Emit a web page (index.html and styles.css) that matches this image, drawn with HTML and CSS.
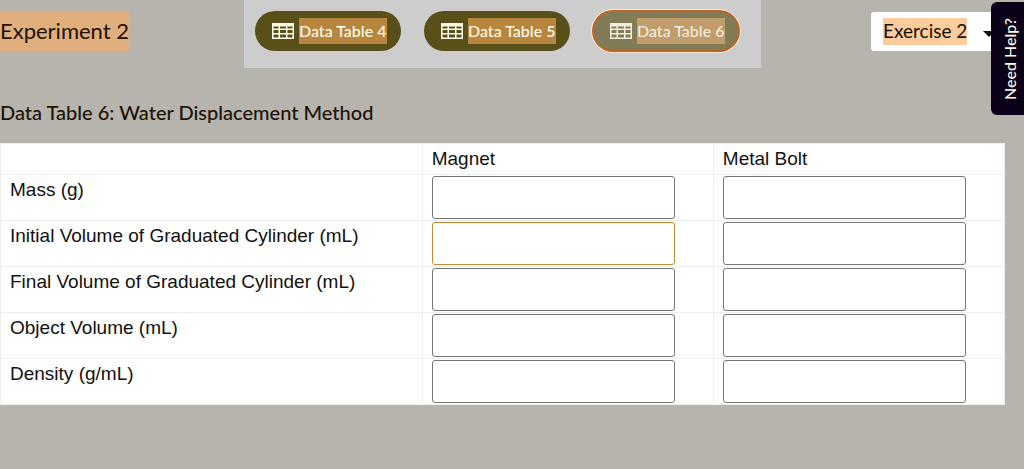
FILE: index.html
```html
<!DOCTYPE html>
<html lang="en">
<head>
<meta charset="utf-8">
<meta name="viewport" content="width=device-width, initial-scale=1">
<title>Experiment 2</title>
<link rel="stylesheet" href="styles.css">
</head>
<body>
<svg class="sprite" aria-hidden="true">
  <symbol id="grid" viewBox="0 0 22 16">
    <path fill="currentColor" fill-rule="evenodd" d="M0 0h22v16H0zM1.500 3.500v2h5v-2zM8 3.500v2h6v-2zM15.500 3.500v2h5v-2zM1.500 7v3h5V7zM8 7v3h6V7zM15.500 7v3h5V7zM1.500 11.500v3h5v-3zM8 11.500v3h6v-3zM15.500 11.500v3h5v-3z"/>
  </symbol>
</svg>
<header class="topbar">
  <h1 class="experiment"><span class="experiment-mark">Experiment 2</span></h1>
  <nav class="tabs" aria-label="Data tables">
    <button class="tab" type="button"><svg class="tab-icon" aria-hidden="true"><use href="#grid"/></svg><span class="tab-label">Data Table 4</span></button>
    <button class="tab" type="button"><svg class="tab-icon" aria-hidden="true"><use href="#grid"/></svg><span class="tab-label">Data Table 5</span></button>
    <button class="tab tab-current" type="button" aria-current="true"><svg class="tab-icon" aria-hidden="true"><use href="#grid"/></svg><span class="tab-label">Data Table 6</span></button>
  </nav>
  <div class="exercise">
    <select class="exercise-select" aria-label="Exercise"><option>Exercise 2</option></select>
    <svg class="caret" viewBox="0 0 12 6" aria-hidden="true"><path d="M0 0h12L6 6z"/></svg>
  </div>
</header>
<main>
  <h2 class="title" id="title">Data Table 6: Water Displacement Method</h2>
  <table class="data" aria-labelledby="title">
    <thead>
      <tr><td class="label-col"></td><th scope="col" id="magnet">Magnet</th><th scope="col" id="bolt">Metal Bolt</th></tr>
    </thead>
    <tbody>
      <tr><th scope="row" id="mass">Mass (g)</th><td><input class="field" type="text" aria-labelledby="mass magnet"></td><td><input class="field" type="text" aria-labelledby="mass bolt"></td></tr>
      <tr><th scope="row" id="initial">Initial Volume of Graduated Cylinder (mL)</th><td><input class="field field-active" type="text" aria-labelledby="initial magnet"></td><td><input class="field" type="text" aria-labelledby="initial bolt"></td></tr>
      <tr><th scope="row" id="final">Final Volume of Graduated Cylinder (mL)</th><td><input class="field" type="text" aria-labelledby="final magnet"></td><td><input class="field" type="text" aria-labelledby="final bolt"></td></tr>
      <tr><th scope="row" id="volume">Object Volume (mL)</th><td><input class="field" type="text" aria-labelledby="volume magnet"></td><td><input class="field" type="text" aria-labelledby="volume bolt"></td></tr>
      <tr><th scope="row" id="density">Density (g/mL)</th><td><input class="field" type="text" aria-labelledby="density magnet"></td><td><input class="field" type="text" aria-labelledby="density bolt"></td></tr>
    </tbody>
  </table>
</main>
<button class="help" type="button"><span class="help-text">Need Help?</span></button>
</body>
</html>
```
FILE: styles.css
```css
* {
  box-sizing: border-box;
}

body {
  margin: 0;
  padding-right: 19px;
  background: #b7b4ad;
  color: #1c1206;
  font-family: Lato, sans-serif;
}

.sprite {
  position: absolute;
  width: 0;
  height: 0;
}

.topbar {
  display: grid;
  grid-template-columns: 1fr auto 1fr;
  align-items: start;
}

.experiment {
  margin: 0;
  padding-top: 12px;
  font-size: 22px;
  font-weight: 400;
  line-height: 37px;
}

.experiment-mark {
  display: inline-block;
  padding-bottom: 2px;
  background: #e1ae7e;
}

.tabs {
  display: flex;
  gap: 23px;
  padding: 11px 22px 17px 11px;
  background: #cdcdcd;
}

.tab {
  display: flex;
  align-items: center;
  gap: 5px;
  height: 40px;
  padding: 0 14px 0 17px;
  border: 0;
  border-radius: 20px;
  background: #584f19;
  color: #fffbe9;
  font: 500 16px/26px Lato, sans-serif;
}

.tab-icon {
  width: 22px;
  height: 16px;
}

.tab-label {
  min-width: 88px;
  background: #b98640;
  text-align: left;
}

.tab-current {
  background: #827c56;
  color: #f4ecdc;
  box-shadow: 0 0 0 1px #c2641f, 0 0 0 2px #f3ebe0, inset 0 0 0 1px #c2641f;
}

.tab-current .tab-label {
  background: #c19d6c;
}

.exercise {
  position: relative;
  justify-self: end;
  width: 134px;
  margin-top: 12px;
}

.exercise-select {
  width: 100%;
  height: 39px;
  padding: 0 12px 2px;
  border: 0;
  border-radius: 3px;
  appearance: none;
  background: linear-gradient(#fccc9c, #fccc9c) 12px 6px / 84px 27px no-repeat #fff;
  color: #160f06;
  font: 400 19px/27px Lato, sans-serif;
}

.caret {
  position: absolute;
  top: 19px;
  right: 10px;
  width: 12px;
  height: 6px;
  fill: #111;
}

.title {
  margin: 31px 0 17px;
  font-size: 20px;
  font-weight: 500;
  line-height: 27px;
}

.data {
  width: 100%;
  border-collapse: collapse;
  table-layout: fixed;
  background: #fff;
  color: #111;
  font: 19px/22px "Liberation Sans", Arial, sans-serif;
}

.data th,
.data td {
  padding: 1px 9px;
  border: 1px solid #eee;
  font-weight: 400;
  text-align: left;
  vertical-align: top;
}

.data .label-col {
  width: 42%;
}

.data thead th {
  padding: 4px 9px;
}

.data tbody th {
  padding-top: 4px;
}

.field {
  display: block;
  width: 243px;
  max-width: 100%;
  height: 43px;
  padding: 0 8px;
  border: 1px solid #767676;
  border-radius: 3px;
  background: #fff;
  font: inherit;
}

.field-active {
  border-color: #c38a32;
}

.help {
  position: fixed;
  top: 2px;
  right: 0;
  display: flex;
  align-items: center;
  justify-content: center;
  width: 33px;
  height: 113px;
  padding: 0 0 0 4px;
  border: 0;
  border-radius: 6px 0 0 6px;
  background: #0a0018;
  color: #fffbe9;
  font: 500 16px/20px Lato, sans-serif;
}

.help-text {
  writing-mode: vertical-rl;
  transform: rotate(180deg);
}
```
